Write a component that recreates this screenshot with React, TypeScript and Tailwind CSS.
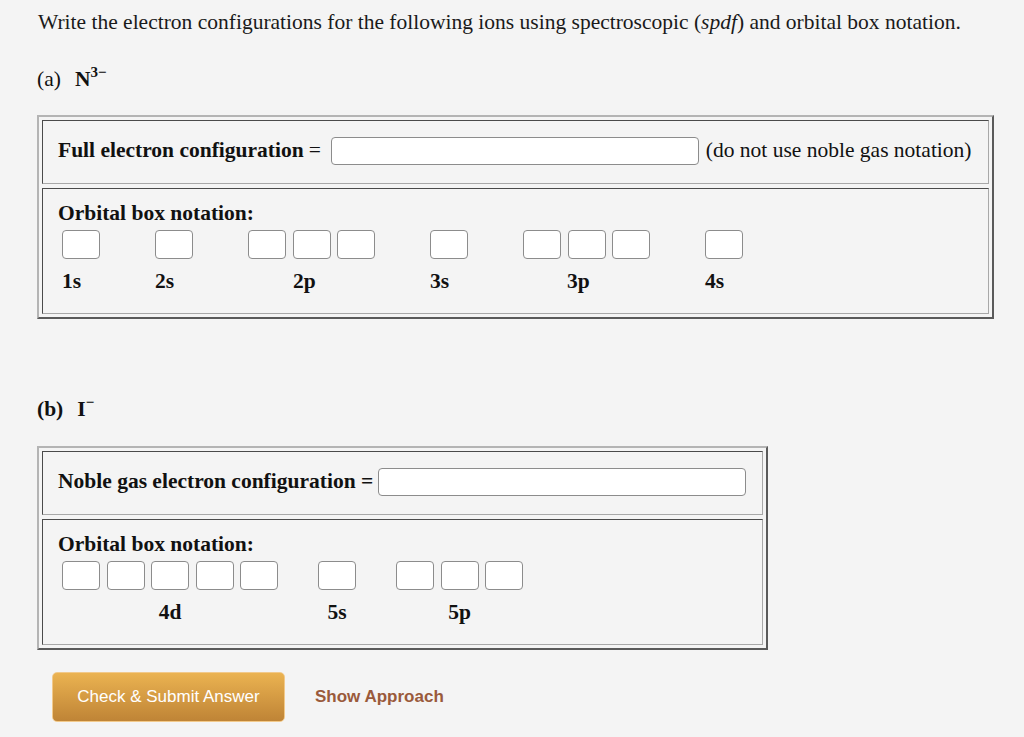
const serif = { fontFamily: '"Liberation Serif", "Times New Roman", serif' };

function Box() {
  return <div className="h-[29px] w-[38px] shrink-0 rounded-[4px] border border-[#8c8c8c] bg-white" />;
}

type Orbital = { label: string; count: number; labelPad?: number };

function OrbitalRow({ items, gap, centered }: { items: Orbital[]; gap: number; centered: boolean }) {
  return (
    <div className="ml-[4px] flex" style={{ columnGap: gap }}>
      {items.map((o) => (
        <div key={o.label} className="flex flex-col">
          <div className="flex gap-[6.5px]">
            {Array.from({ length: o.count }).map((_, i) => (
              <Box key={i} />
            ))}
          </div>
          <div
            className={`mt-[10px] text-[21.5px] font-bold leading-[24px] ${centered ? 'text-center' : ''}`}
            style={o.labelPad ? { paddingLeft: o.labelPad } : undefined}
          >
            {o.label}
          </div>
        </div>
      ))}
    </div>
  );
}

function Panel({ width, children }: { width: number; children: React.ReactNode }) {
  return (
    <div
      className="flex flex-col gap-[4px] border-2 border-t-[#b4b4b4] border-l-[#b4b4b4] border-r-[#5a5a5a] border-b-[#5a5a5a] p-[3px]"
      style={{ width }}
    >
      {children}
    </div>
  );
}

function Cell({ className = '', children }: { className?: string; children: React.ReactNode }) {
  return (
    <div
      className={`border border-t-[#4a4a4a] border-l-[#4a4a4a] border-r-[#a8a8a8] border-b-[#a8a8a8] px-[15px] ${className}`}
    >
      {children}
    </div>
  );
}

function TextInput() {
  return <div className="h-[28px] w-[368px] shrink-0 rounded-[4px] border border-[#8c8c8c] bg-white" />;
}

export default function App() {
  return (
    <div className="min-h-screen bg-[#f4f4f4] pl-[37px] pt-[10px] text-[#111]" style={serif}>
      <p className="pl-[1px] text-[21.5px] leading-[24px] text-[#1a1a1a]">
        Write the electron configurations for the following ions using spectroscopic (<i>spdf</i>) and orbital box
        notation.
      </p>

      {/* (a) */}
      <p className="mt-[33px] h-[24px] text-[21.5px] leading-[24px]">
        (a)<b className="ml-[14px]">N</b>
        <sup className="relative top-[-9px] text-[15px] font-bold">3−</sup>
      </p>

      <div className="mt-[24px]">
        <Panel width={957}>
          <Cell className="flex h-[64px] items-center pb-[3px]">
            <span className="text-[21.5px] font-bold">Full electron configuration</span>
            <span className="ml-[5px] text-[21.5px]">=</span>
            <div className="ml-[10px] mt-[1px]">
              <TextInput />
            </div>
            <span className="ml-[7px] text-[21.5px]">(do not use noble gas notation)</span>
          </Cell>
          <Cell className="h-[126px] pt-[12px]">
            <div className="text-[21.5px] font-bold leading-[24px]">Orbital box notation:</div>
            <div className="mt-[5px]">
              <OrbitalRow
                gap={55}
                centered={false}
                items={[
                  { label: '1s', count: 1 },
                  { label: '2s', count: 1 },
                  { label: '2p', count: 3, labelPad: 45 },
                  { label: '3s', count: 1 },
                  { label: '3p', count: 3, labelPad: 44 },
                  { label: '4s', count: 1 },
                ]}
              />
            </div>
          </Cell>
        </Panel>
      </div>

      {/* (b) */}
      <p className="mt-[78px] h-[24px] text-[21.5px] font-bold leading-[24px]">
        (b)<span className="ml-[14px]">I</span>
        <sup className="relative top-[-9px] text-[15px]">−</sup>
      </p>

      <div className="mt-[25px]">
        <Panel width={731}>
          <Cell className="flex h-[64px] items-center pb-[3px]">
            <span className="text-[21.5px] font-bold">Noble gas electron configuration =</span>
            <div className="ml-[5px] mt-[1px]">
              <TextInput />
            </div>
          </Cell>
          <Cell className="h-[126px] pt-[12px]">
            <div className="text-[21.5px] font-bold leading-[24px]">Orbital box notation:</div>
            <div className="mt-[5px]">
              <OrbitalRow
                gap={40}
                centered
                items={[
                  { label: '4d', count: 5 },
                  { label: '5s', count: 1 },
                  { label: '5p', count: 3 },
                ]}
              />
            </div>
          </Cell>
        </Panel>
      </div>

      <div className="ml-[15px] mt-[22px] flex items-center" style={{ fontFamily: '"Liberation Sans", Arial, sans-serif' }}>
        <button className="h-[50px] w-[233px] rounded-[5px] border border-[#f2c98a] bg-gradient-to-b from-[#ebb351] to-[#bf8436] text-[17px] text-white">
          Check &amp; Submit Answer
        </button>
        <span className="ml-[30px] text-[17px] font-bold text-[#9a5a3b]">Show Approach</span>
      </div>
    </div>
  );
}
